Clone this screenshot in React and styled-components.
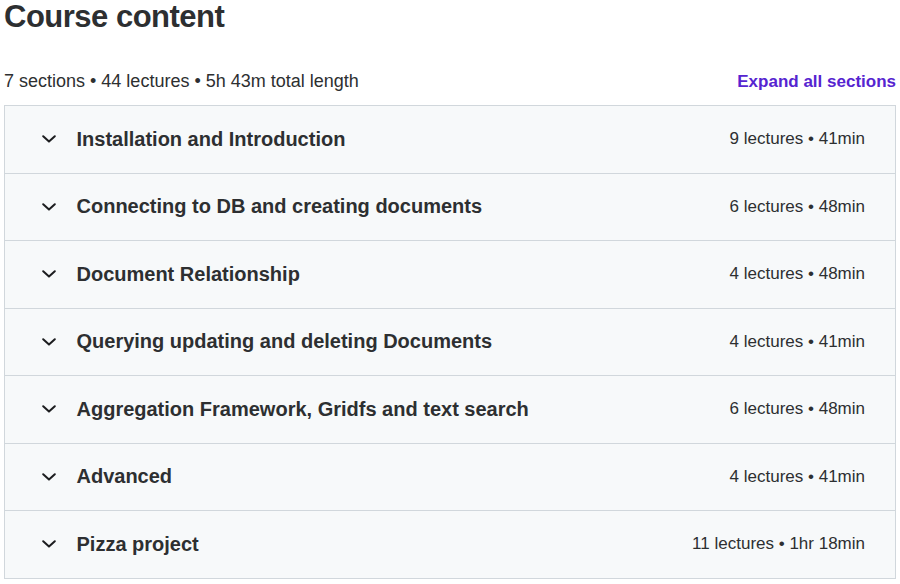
import React from "react";
import styled, { createGlobalStyle } from "styled-components";

const Global = createGlobalStyle`
  html, body { margin: 0; padding: 0; background: #ffffff; }
  body { font-family: "Liberation Sans", Arial, sans-serif; color: #2d2f31; }
`;

const Page = styled.div`
  width: 892px;
  padding-left: 4px;
`;

const Title = styled.h2`
  margin: 0;
  font-size: 31px;
  line-height: 34px;
  font-weight: 700;
  letter-spacing: -0.5px;
  color: #2d2f31;
`;

const Summary = styled.div`
  display: flex;
  justify-content: space-between;
  align-items: baseline;
  margin-top: 35px;
  margin-bottom: 11px;
  line-height: 25px;
`;

const Meta = styled.span`
  font-size: 18px;
  color: #2d2f31;
`;

const ExpandLink = styled.button`
  border: 0;
  background: none;
  padding: 0;
  font-family: inherit;
  font-size: 17px;
  font-weight: 700;
  color: #5624d0;
  cursor: pointer;
`;

const Sections = styled.div`
  border: 1px solid #d1d7dc;
  border-top: 0;
`;

const Row = styled.div`
  box-sizing: border-box;
  height: 67.5px;
  border-top: 1px solid #d1d7dc;
  background: #f7f9fa;
  display: flex;
  align-items: center;
  padding: 0 30px 0 36.5px;
`;

const Chevron = styled.svg`
  flex: none;
  width: 14px;
  height: 8px;
  margin-right: 21px;
`;

const SectionTitle = styled.span`
  flex: 1;
  font-size: 20px;
  font-weight: 700;
  color: #2d2f31;
`;

const SectionMeta = styled.span`
  font-size: 17px;
  color: #2d2f31;
`;

const sections = [
  ["Installation and Introduction", "9 lectures • 41min"],
  ["Connecting to DB and creating documents", "6 lectures • 48min"],
  ["Document Relationship", "4 lectures • 48min"],
  ["Querying updating and deleting Documents", "4 lectures • 41min"],
  ["Aggregation Framework, Gridfs and text search", "6 lectures • 48min"],
  ["Advanced", "4 lectures • 41min"],
  ["Pizza project", "11 lectures • 1hr 18min"],
];

export default function App() {
  return (
    <>
      <Global />
      <Page>
        <Title>Course content</Title>
        <Summary>
          <Meta>7 sections • 44 lectures • 5h 43m total length</Meta>
          <ExpandLink>Expand all sections</ExpandLink>
        </Summary>
        <Sections>
          {sections.map(([t, m]) => (
            <Row key={t}>
              <Chevron viewBox="0 0 14 8">
                <polyline
                  points="1.2,1.2 7,6.6 12.8,1.2"
                  fill="none"
                  stroke="#1c1d1f"
                  strokeWidth="2"
                  strokeLinecap="round"
                  strokeLinejoin="round"
                />
              </Chevron>
              <SectionTitle>{t}</SectionTitle>
              <SectionMeta>{m}</SectionMeta>
            </Row>
          ))}
        </Sections>
      </Page>
    </>
  );
}
